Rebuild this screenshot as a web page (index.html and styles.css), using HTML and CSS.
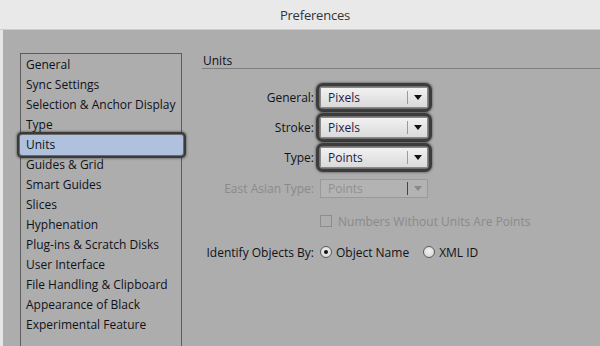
FILE: index.html
```html
<!DOCTYPE html>
<html>
<head>
<meta charset="utf-8">
<link rel="stylesheet" href="styles.css">
</head>
<body>
<div class="titlebar"><span class="title">Preferences</span></div>
<div class="dialog">
  <div class="sidebar">
    <ul class="list">
      <li>General</li>
      <li>Sync Settings</li>
      <li>Selection &amp; Anchor Display</li>
      <li>Type</li>
      <li class="selected">Units</li>
      <li>Guides &amp; Grid</li>
      <li>Smart Guides</li>
      <li>Slices</li>
      <li>Hyphenation</li>
      <li>Plug-ins &amp; Scratch Disks</li>
      <li>User Interface</li>
      <li>File Handling &amp; Clipboard</li>
      <li>Appearance of Black</li>
      <li>Experimental Feature</li>
    </ul>
  </div>
  <div class="panel">
    <div class="heading">Units</div>
    <div class="form">
      <div class="row">
        <span class="label">General:</span>
        <div class="frame"><div class="select"><span class="value">Pixels</span><span class="sep"></span><span class="arrow"></span></div></div>
      </div>
      <div class="row">
        <span class="label">Stroke:</span>
        <div class="frame"><div class="select"><span class="value">Pixels</span><span class="sep"></span><span class="arrow"></span></div></div>
      </div>
      <div class="row row-tall">
        <span class="label">Type:</span>
        <div class="frame"><div class="select"><span class="value">Points</span><span class="sep"></span><span class="arrow"></span></div></div>
      </div>
      <div class="row disabled">
        <span class="label">East Asian Type:</span>
        <div class="select"><span class="value">Points</span><span class="sep"></span><span class="arrow"></span></div>
      </div>
      <div class="row row-check disabled">
        <span class="label"></span>
        <div class="check"><span class="box"></span><span>Numbers Without Units Are Points</span></div>
      </div>
      <div class="row row-radio">
        <span class="label">Identify Objects By:</span>
        <div class="radios">
          <span class="radio on"></span><span class="rlabel">Object Name</span>
          <span class="radio"></span><span class="rlabel">XML ID</span>
        </div>
      </div>
    </div>
  </div>
</div>
</body>
</html>
```
FILE: styles.css
```css
* { box-sizing: border-box; }
html, body { margin: 0; padding: 0; }
body {
  width: 600px;
  height: 346px;
  overflow: hidden;
  background: #adadad;
  font-family: "Open Sans", "Noto Sans", sans-serif;
  font-size: 12px;
  color: #111118;
}
.titlebar {
  height: 30px;
  background: #e9e9e9;
  border-bottom: 1px solid #cdcdcd;
  display: flex;
  align-items: center;
  justify-content: center;
  padding-left: 30px;
}
.title {
  font-size: 13px;
  letter-spacing: -0.2px;
  color: #333;
}
.dialog {
  display: flex;
  height: 316px;
  overflow: hidden;
  border-left: 3px solid #e6e6e6;
  padding-top: 23px;
}
.sidebar {
  padding-left: 17px;
  width: 199px;
}
.list {
  list-style: none;
  margin: 0;
  padding: 1px 0 0 0;
  width: 162px;
  height: 293px;
  border: 1px solid #5c5c5c;
  border-bottom: none;
}
.list li {
  height: 20px;
  line-height: 20px;
  padding-left: 5px;
  white-space: nowrap;
}
.list li.selected {
  background: #afc1dc;
  margin-left: -1px;
  margin-right: -2px;
  padding-left: 6px;
  border-radius: 2px;
  box-shadow: 0 0 0 1px #6a6a6a, 0 0 0 3px #3a3a3a, 0 0 2px 4px rgba(0,0,0,0.3);
}
.panel {
  flex: 1;
}
.heading {
  height: 16px;
  line-height: 15px;
  padding-left: 1px;
  border-bottom: 1px solid #7d7d7d;
}
.form {
  padding-top: 13px;
}
.row {
  display: grid;
  grid-template-columns: 112px auto;
  column-gap: 6px;
  align-items: center;
  height: 30px;
}
.row-tall { height: 31px; }
.row-check { height: 32px; margin-top: 2px; }
.row-radio { height: 30px; }
.label {
  text-align: right;
  white-space: nowrap;
}
.frame {
  width: 108px;
  height: 21px;
  border-radius: 3px;
  box-shadow: 0 0 0 1px #707070, 0 0 0 4px #3c3c3c, 0 0 2px 5px rgba(0,0,0,0.3);
}
.select {
  width: 108px;
  height: 21px;
  border: 1px solid #8a8a8a;
  background: linear-gradient(#f1f1f1, #dadada);
  display: flex;
  align-items: center;
  padding-left: 7px;
}
.value {
  flex: 1;
  color: #1c1c48;
}
.sep {
  width: 1px;
  height: 13px;
  background: #9a9a9a;
  margin-right: 6px;
}
.arrow {
  width: 0;
  height: 0;
  border-left: 4px solid transparent;
  border-right: 4px solid transparent;
  border-top: 5px solid #111;
  margin-right: 5px;
}
.disabled .label { color: #8a8a8a; }
.disabled .select {
  background: #b3b3b3;
  border-color: #999;
  height: 19px;
}
.disabled .value { color: #909090; }
.disabled .sep { background: #444; }
.disabled .arrow { border-top-color: #888; }
.check {
  display: flex;
  align-items: center;
  color: #8a8a8a;
}
.box {
  width: 12px;
  height: 12px;
  border: 1px solid #8c8c8c;
  margin-right: 6px;
}
.radios {
  display: flex;
  align-items: center;
}
.radio {
  width: 12px;
  height: 12px;
  border-radius: 50%;
  border: 1px solid #5c5c5c;
  background: radial-gradient(circle at 50% 40%, #f2f2f2, #cfcfcf);
  margin-right: 4px;
  display: flex;
  align-items: center;
  justify-content: center;
}
.radio.on::after {
  content: "";
  width: 4px;
  height: 4px;
  border-radius: 50%;
  background: #111;
}
.rlabel { margin-right: 14px; }
```
